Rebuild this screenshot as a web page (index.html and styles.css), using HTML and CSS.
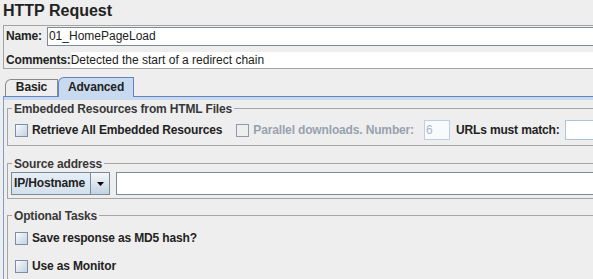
FILE: index.html
```html
<!DOCTYPE html>
<html>
<head>
<meta charset="utf-8">
<link rel="stylesheet" href="styles.css">
</head>
<body>
<div class="page">
  <h1 class="title">HTTP Request</h1>
  <div class="name-panel">
    <div class="name-row">
      <span class="lbl">Name:</span>
      <div class="name-field">01_HomePageLoad</div>
    </div>
    <div class="comments-row">
      <span class="lbl">Comments:</span>
      <div class="comments-field">Detected the start of a redirect chain</div>
    </div>
  </div>
  <div class="tabs">
    <div class="tab">Basic</div>
    <div class="tab tab-selected">Advanced</div>
  </div>
  <div class="tab-content">
    <div class="strip"></div>
    <fieldset class="group group-embedded">
      <legend>Embedded Resources from HTML Files</legend>
      <div class="row">
        <span class="check"></span>
        <span class="lbl">Retrieve All Embedded Resources</span>
        <span class="check check-disabled"></span>
        <span class="lbl lbl-disabled">Parallel downloads. Number:</span>
        <div class="num-field">6</div>
        <span class="lbl lbl-urls">URLs must match:</span>
        <div class="url-field"></div>
      </div>
    </fieldset>
    <fieldset class="group group-source">
      <legend>Source address</legend>
      <div class="src-row">
        <div class="combo">
          <div class="combo-value">IP/Hostname</div>
          <div class="combo-btn"><svg width="7" height="4" viewBox="0 0 7 4"><path d="M0 0H7L3.5 4Z" fill="#000"/></svg></div>
        </div>
        <div class="src-field"></div>
      </div>
    </fieldset>
    <fieldset class="group group-optional">
      <legend>Optional Tasks</legend>
      <div class="row">
        <span class="check"></span>
        <span class="lbl">Save response as MD5 hash?</span>
      </div>
      <div class="row row-second">
        <span class="check"></span>
        <span class="lbl">Use as Monitor</span>
      </div>
    </fieldset>
  </div>
</div>
</body>
</html>
```

FILE: styles.css
```css
html, body {
  margin: 0;
  padding: 0;
  background: #eeeeee;
}
body {
  width: 593px;
  height: 279px;
  overflow: hidden;
  font-family: "Liberation Sans", Arial, sans-serif;
  font-size: 12px;
  color: #222222;
}
.page {
  width: 680px;
  height: 279px;
  overflow: hidden;
}
.title {
  margin: 0 0 3px;
  padding-left: 3px;
  font-size: 16px;
  line-height: 22px;
  font-weight: bold;
  color: #222222;
}
.lbl {
  font-weight: bold;
  letter-spacing: -0.15px;
  white-space: nowrap;
}
.name-panel {
  margin-left: 3px;
  border: 1px solid #a3a3a3;
  border-right: none;
}
.name-row {
  display: flex;
  align-items: flex-start;
  padding-top: 1px;
}
.name-row .lbl {
  padding-left: 2px;
  line-height: 19px;
}
.name-field {
  flex: 1;
  margin-left: 5px;
  height: 19px;
  box-sizing: border-box;
  border: 1px solid #7d8b99;
  background: #ffffff;
  padding-left: 1px;
  line-height: 17px;
  white-space: nowrap;
}
.comments-row {
  display: flex;
  margin-top: 6px;
  height: 16px;
  line-height: 16px;
}
.comments-row .lbl {
  padding-left: 2px;
}
.comments-field {
  flex: 1;
  background: #ffffff;
  white-space: nowrap;
}
.tabs {
  display: flex;
  align-items: flex-end;
  height: 19px;
  margin: 8px 0 0 5px;
}
.tab {
  box-sizing: border-box;
  width: 53px;
  height: 17px;
  border: 1px solid #8a8a8a;
  border-bottom: none;
  border-top-left-radius: 6px;
  font-weight: bold;
  letter-spacing: -0.15px;
  line-height: 14px;
  text-align: center;
  color: #222222;
}
.tab-selected {
  width: 76px;
  height: 20px;
  margin-bottom: -1px;
  padding-top: 2px;
  background: #c8daf0;
  border-color: #6382bf;
  position: relative;
  z-index: 1;
}
.tab-content {
  margin-left: 3px;
  border-top: 1px solid #6382bf;
  border-left: 1px solid #7f9ccb;
}
.strip {
  height: 3px;
  background: #c8daf0;
}
.group {
  margin: 0 0 0 3px;
  padding: 4px 0 5px 3px;
  border: 1px solid #a5a5a5;
  min-width: 0;
}
.group legend {
  padding: 2px 2px 0;
  margin-left: 1px;
  line-height: 14px;
  font-weight: bold;
  letter-spacing: -0.15px;
  color: #383838;
  white-space: nowrap;
}
.row {
  display: flex;
  align-items: center;
  height: 20px;
  padding-left: 4px;
}
.check {
  flex: none;
  width: 13px;
  height: 13px;
  box-sizing: border-box;
  border: 1px solid #7d8ea3;
  background: linear-gradient(135deg, #fbfdff 0%, #dfe8f1 45%, #c4d3e3 100%);
  margin-right: 4px;
}
.check-disabled {
  margin-left: 14px;
  border-color: #8f9aa6;
  background: transparent;
}
.lbl-disabled {
  color: #98a2ae;
}
.num-field {
  flex: none;
  width: 26px;
  height: 20px;
  box-sizing: border-box;
  margin-left: 10px;
  border: 1px solid #b8cfe5;
  background: #f9fafb;
  color: #a9b7c6;
  line-height: 18px;
  padding-left: 1px;
}
.lbl-urls {
  margin-left: 6px;
}
.url-field {
  flex: 1;
  height: 20px;
  box-sizing: border-box;
  margin-left: 5px;
  border: 1px solid #a9c3e0;
  background: #ffffff;
}
.group-source {
  margin-top: 9px;
  padding-top: 1px;
  padding-bottom: 3px;
}
.src-row {
  display: flex;
  height: 23px;
}
.combo {
  display: flex;
  flex: none;
}
.combo-value {
  width: 80px;
  box-sizing: border-box;
  border: 1px solid #7a8a99;
  background: linear-gradient(#e6eef6, #d3e0ec);
  font-weight: bold;
  letter-spacing: -0.15px;
  line-height: 21px;
  padding-left: 2px;
  white-space: nowrap;
}
.combo-btn {
  width: 19px;
  box-sizing: border-box;
  border: 1px solid #7a8a99;
  border-left: none;
  background: linear-gradient(#f4f7fa, #c3d2e1);
  display: flex;
  align-items: center;
  justify-content: center;
}
.src-field {
  flex: 1;
  margin-left: 6px;
  box-sizing: border-box;
  border: 1px solid #7a8a99;
  background: #ffffff;
}
.group-optional {
  margin-top: 8px;
  padding-top: 5px;
  padding-bottom: 10px;
}
.row-second {
  margin-top: 8px;
}
```
